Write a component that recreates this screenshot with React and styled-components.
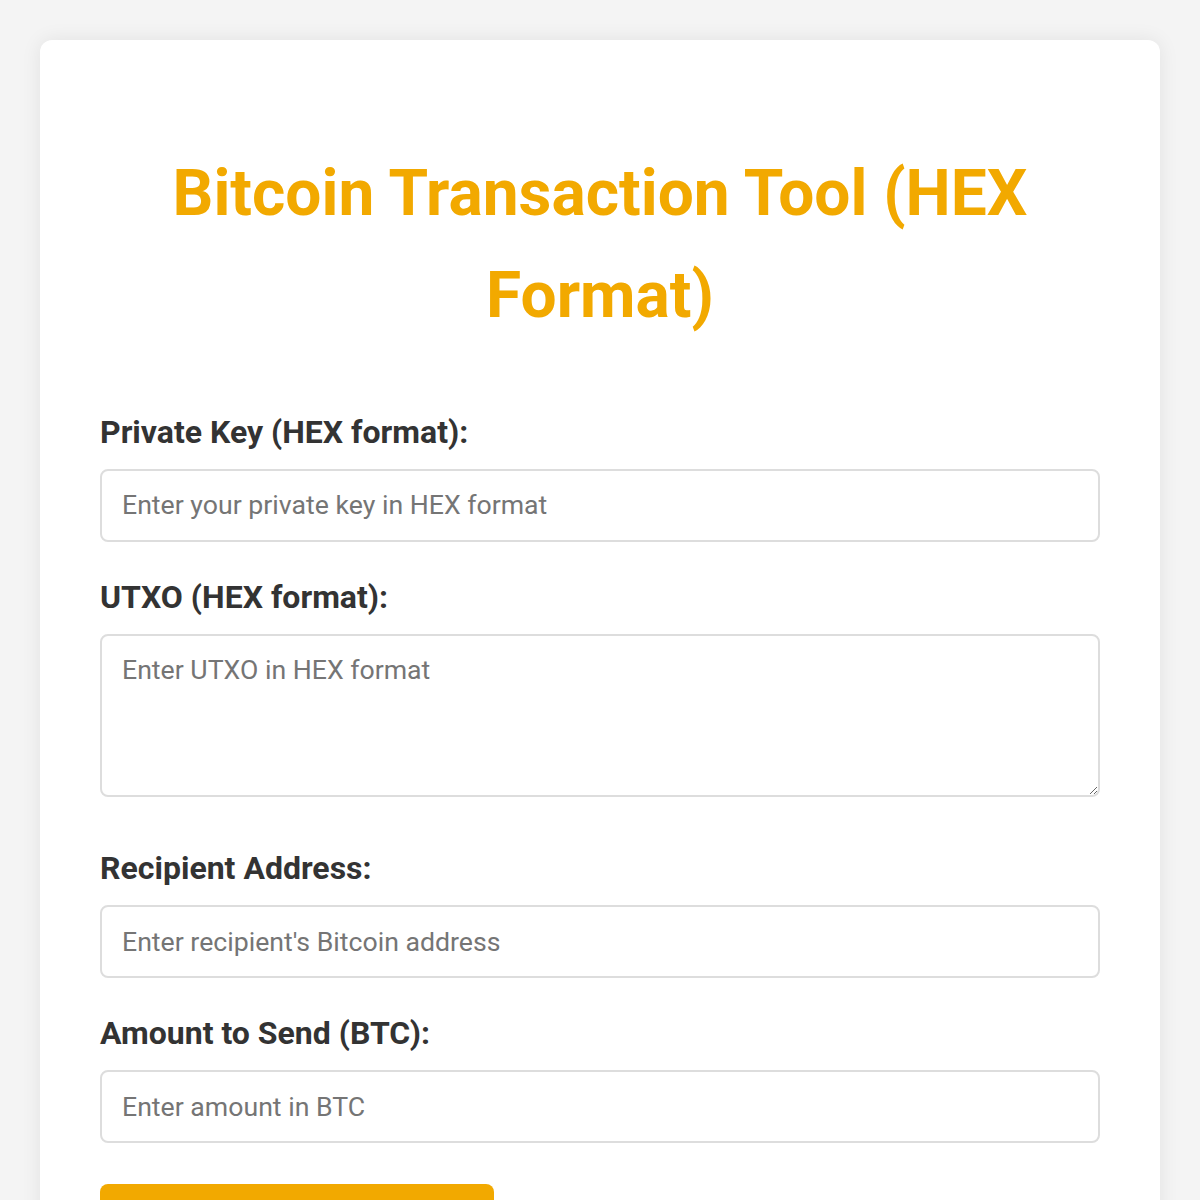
import React from "react";
import styled, { createGlobalStyle } from "styled-components";

const GlobalStyle = createGlobalStyle`
  html, body {
    margin: 0;
    padding: 0;
    background: #f4f4f4;
  }
  body {
    font-family: Roboto, "Liberation Sans", Arial, sans-serif;
    line-height: 1.6;
    color: #333;
  }
  * { box-sizing: border-box; }
`;

const Card = styled.div`
  max-width: 1120px;
  margin: 40px auto;
  padding: 60px;
  background: #ffffff;
  border-radius: 12px;
  box-shadow: 0 0 20px rgba(0, 0, 0, 0.08);
`;

const Title = styled.h1`
  margin: 42.88px 0 59px;
  font-size: 64px;
  font-weight: 700;
  line-height: 1.6;
  color: #f2a900;
  text-align: center;
`;

const Form = styled.form`
  display: flex;
  flex-direction: column;
`;

const Label = styled.label`
  display: block;
  margin-bottom: 11px;
  font-size: 32px;
  font-weight: 700;
  line-height: 1.6;
  color: #333;
`;

const fieldBase = `
  display: block;
  width: 100%;
  border: 2px solid #ddd;
  border-radius: 8px;
  background: #fff;
  font-family: Roboto, "Liberation Sans", Arial, sans-serif;
  font-size: 26.67px;
  color: #333;
  outline: none;
  &::placeholder { color: #757575; }
`;

const Input = styled.input`
  ${fieldBase}
  height: 73px;
  padding: 0 20px;
  margin-bottom: 30px;
`;

const TextArea = styled.textarea`
  ${fieldBase}
  height: 163px;
  padding: 18px 20px;
  margin-bottom: 46px;
  line-height: normal;
`;

const Button = styled.button`
  align-self: flex-start;
  width: 394px;
  margin-top: 11px;
  padding: 24px 0;
  border: none;
  border-radius: 8px;
  background: #f2a900;
  color: #fff;
  font-family: Roboto, "Liberation Sans", Arial, sans-serif;
  font-size: 32px;
  font-weight: 700;
  cursor: pointer;
`;

export default function App() {
  return (
    <>
      <GlobalStyle />
      <Card>
        <Title>Bitcoin Transaction Tool (HEX Format)</Title>
        <Form onSubmit={(e) => e.preventDefault()}>
          <Label htmlFor="pk">Private Key (HEX format):</Label>
          <Input id="pk" type="text" placeholder="Enter your private key in HEX format" />
          <Label htmlFor="utxo">UTXO (HEX format):</Label>
          <TextArea id="utxo" placeholder="Enter UTXO in HEX format" />
          <Label htmlFor="addr">Recipient Address:</Label>
          <Input id="addr" type="text" placeholder="Enter recipient's Bitcoin address" />
          <Label htmlFor="amt">Amount to Send (BTC):</Label>
          <Input id="amt" type="text" placeholder="Enter amount in BTC" />
          <Button type="submit">Create Transaction</Button>
        </Form>
      </Card>
    </>
  );
}
